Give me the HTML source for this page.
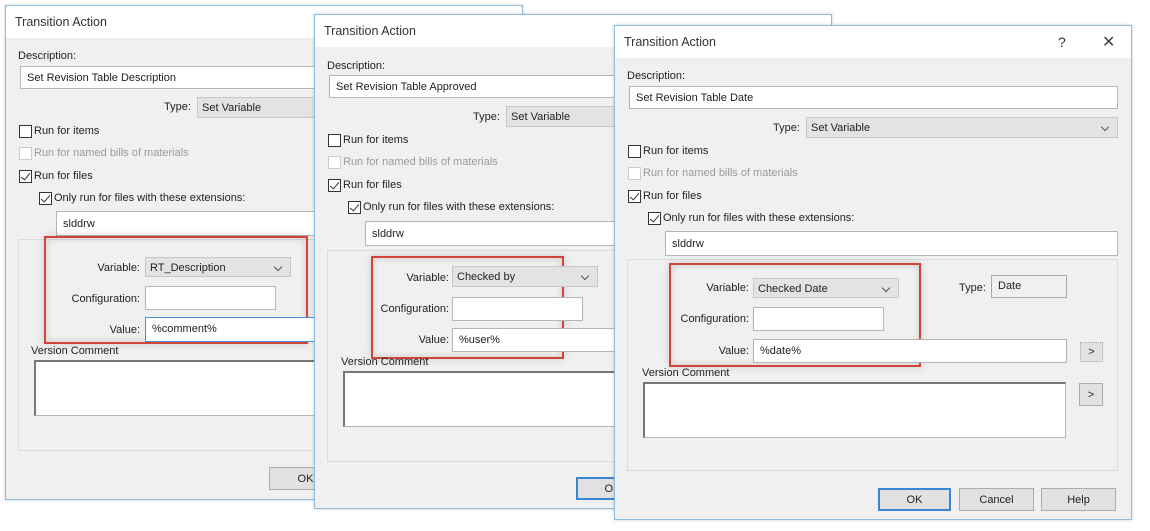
<!DOCTYPE html>
<html><head><meta charset="utf-8"><style>
*{box-sizing:border-box;margin:0;padding:0}
body{width:1150px;height:531px;background:#fff;position:relative;overflow:hidden;font-family:"Liberation Sans",sans-serif;font-size:11px;color:#222}
.d{position:absolute;width:518px;height:495px;background:#f0f0f0;border:1px solid #8cbde3;box-shadow:0 0 3px rgba(0,0,0,.2)}
.d *{position:absolute;white-space:nowrap}
.tb{left:0;top:0;width:516px;height:32px;background:#fff}
.tt{left:9px;top:9px;font-size:12.5px;color:#333}
.in{background:#fff;border:1px solid #b5b5b5;padding:5px 0 0 6px}
.sel{background:#e3e3e3;border:1px solid #c8c8c8;padding:4px 0 0 4px}
.sel:after{content:"";position:absolute;right:9px;top:6px;width:5px;height:5px;border-right:1px solid #555;border-bottom:1px solid #555;transform:rotate(45deg)}
.cb{width:13px;height:13px;border:1px solid #333;background:#fff}
.cb.g{border-color:#ccc}
.cb.k:after{content:"";position:absolute;left:3px;top:0px;width:4px;height:8px;border-right:1.5px solid #333;border-bottom:1.5px solid #333;transform:rotate(40deg)}
.gr{color:#9a9a9a}
.r{text-align:right;width:100px}
.grp{left:12px;top:233px;width:491px;height:212px;border:1px solid #dcdcdc}
.red{border:2px solid #d0453a;box-shadow:inset 0 0 8px rgba(0,0,0,.15),0 0 8px rgba(0,0,0,.15)}
.bt{background:#e1e1e1;border:1px solid #adadad;text-align:center;padding-top:5px;height:23px}
.ok{border:2px solid #3a86d6;padding-top:4px}
</style></head><body>

<!-- Dialog 1 -->
<div class="d" style="left:5px;top:5px">
<div class="tb"></div><div class="tt">Transition Action</div>
<div style="left:12px;top:44px">Description:</div>
<div class="in" style="left:14px;top:60px;width:489px;height:23px">Set Revision Table Description</div>
<div style="left:158px;top:95px">Type:</div>
<div class="sel" style="left:191px;top:91px;width:312px;height:21px">Set Variable</div>
<div class="cb" style="left:13px;top:119px"></div><div style="left:28px;top:119px">Run for items</div>
<div class="cb g" style="left:13px;top:141px"></div><div class="gr" style="left:28px;top:141px">Run for named bills of materials</div>
<div class="cb k" style="left:13px;top:164px"></div><div style="left:28px;top:164px">Run for files</div>
<div class="cb k" style="left:33px;top:186px"></div><div style="left:48px;top:186px">Only run for files with these extensions:</div>
<div class="in" style="left:50px;top:205px;width:453px;height:25px;padding-top:6px">slddrw</div>
<div class="grp"></div>
<div class="red" style="left:38px;top:230px;width:264px;height:108px"></div>
<div class="r" style="left:34px;top:256px">Variable:</div>
<div class="sel" style="left:139px;top:251px;width:146px;height:20px">RT_Description</div>
<div class="r" style="left:34px;top:287px">Configuration:</div>
<div class="in" style="left:139px;top:280px;width:131px;height:24px"></div>
<div class="r" style="left:34px;top:318px">Value:</div>
<div class="in" style="left:139px;top:311px;width:314px;height:25px;border-color:#4a90d9">%comment%</div>
<div style="left:25px;top:339px">Version Comment</div>
<div class="in" style="left:28px;top:354px;width:423px;height:56px;border-top:2px solid #777;border-left:2px solid #777"></div>
<div class="bt" style="left:263px;top:461px;width:73px">OK</div>
</div>

<!-- Dialog 2 -->
<div class="d" style="left:314px;top:14px">
<div class="tb"></div><div class="tt">Transition Action</div>
<div style="left:12px;top:45px">Description:</div>
<div class="in" style="left:14px;top:60px;width:489px;height:23px">Set Revision Table Approved</div>
<div style="left:158px;top:96px">Type:</div>
<div class="sel" style="left:191px;top:91px;width:312px;height:21px">Set Variable</div>
<div class="cb" style="left:13px;top:119px"></div><div style="left:28px;top:119px">Run for items</div>
<div class="cb g" style="left:13px;top:141px"></div><div class="gr" style="left:28px;top:141px">Run for named bills of materials</div>
<div class="cb k" style="left:13px;top:164px"></div><div style="left:28px;top:164px">Run for files</div>
<div class="cb k" style="left:33px;top:186px"></div><div style="left:48px;top:186px">Only run for files with these extensions:</div>
<div class="in" style="left:50px;top:206px;width:453px;height:25px;padding-top:6px">slddrw</div>
<div class="grp" style="top:235px"></div>
<div class="red" style="left:56px;top:241px;width:193px;height:103px"></div>
<div class="r" style="left:34px;top:257px">Variable:</div>
<div class="sel" style="left:137px;top:251px;width:146px;height:21px">Checked by</div>
<div class="r" style="left:34px;top:288px">Configuration:</div>
<div class="in" style="left:137px;top:282px;width:131px;height:24px"></div>
<div class="r" style="left:34px;top:319px">Value:</div>
<div class="in" style="left:137px;top:313px;width:314px;height:24px">%user%</div>
<div style="left:26px;top:341px">Version Comment</div>
<div class="in" style="left:28px;top:356px;width:423px;height:56px;border-top:2px solid #777;border-left:2px solid #777"></div>
<div class="bt ok" style="left:261px;top:462px;width:73px">OK</div>
</div>

<!-- Dialog 3 -->
<div class="d" style="left:614px;top:25px">
<div class="tb"></div><div class="tt">Transition Action</div>
<div style="left:443px;top:8px;font-size:14px;color:#333">?</div>
<div style="left:487px;top:6px;font-size:16px;color:#444">✕</div>
<div style="left:12px;top:44px">Description:</div>
<div class="in" style="left:14px;top:60px;width:489px;height:23px">Set Revision Table Date</div>
<div style="left:158px;top:96px">Type:</div>
<div class="sel" style="left:191px;top:91px;width:312px;height:21px">Set Variable</div>
<div class="cb" style="left:13px;top:119px"></div><div style="left:28px;top:119px">Run for items</div>
<div class="cb g" style="left:13px;top:141px"></div><div class="gr" style="left:28px;top:141px">Run for named bills of materials</div>
<div class="cb k" style="left:13px;top:164px"></div><div style="left:28px;top:164px">Run for files</div>
<div class="cb k" style="left:33px;top:186px"></div><div style="left:48px;top:186px">Only run for files with these extensions:</div>
<div class="in" style="left:50px;top:205px;width:453px;height:25px;padding-top:6px">slddrw</div>
<div class="grp"></div>
<div class="red" style="left:54px;top:237px;width:252px;height:104px"></div>
<div class="r" style="left:34px;top:256px">Variable:</div>
<div class="sel" style="left:138px;top:252px;width:146px;height:20px">Checked Date</div>
<div style="left:344px;top:256px">Type:</div>
<div class="in" style="left:376px;top:249px;width:76px;height:23px;background:#f0f0f0;border-color:#aaa;padding-top:4px">Date</div>
<div class="r" style="left:34px;top:287px">Configuration:</div>
<div class="in" style="left:138px;top:281px;width:131px;height:24px"></div>
<div class="r" style="left:34px;top:319px">Value:</div>
<div class="in" style="left:138px;top:313px;width:314px;height:24px">%date%</div>
<div class="bt" style="left:465px;top:316px;width:23px;height:20px;padding-top:3px;border-style:dotted">&gt;</div>
<div style="left:27px;top:341px">Version Comment</div>
<div class="in" style="left:28px;top:356px;width:423px;height:56px;border-top:2px solid #777;border-left:2px solid #777"></div>
<div class="bt" style="left:464px;top:357px;width:24px;height:23px">&gt;</div>
<div class="bt ok" style="left:263px;top:462px;width:73px">OK</div>
<div class="bt" style="left:344px;top:462px;width:75px">Cancel</div>
<div class="bt" style="left:426px;top:462px;width:75px">Help</div>
</div>
</body></html>
